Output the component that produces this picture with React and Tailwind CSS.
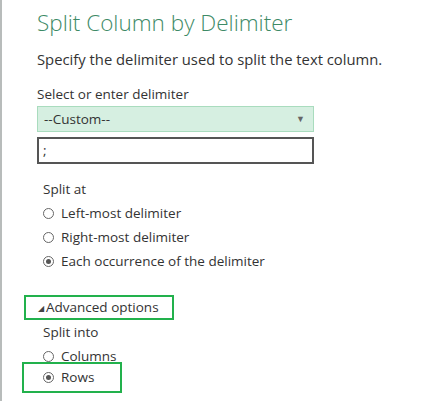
function Radio({ checked, label }) {
  return (
    <div className="flex items-center h-6 gap-[7px]">
      <span className="w-[11px] h-[11px] rounded-full border border-[#666] bg-white flex items-center justify-center">
        {checked && <span className="w-[5px] h-[5px] rounded-full bg-[#555]" />}
      </span>
      <span>{label}</span>
    </div>
  );
}

export default function App() {
  return (
    <div
      className="w-[434px] h-[401px] bg-white flex text-[#333] overflow-hidden"
      style={{ fontFamily: '"Segoe UI", "Open Sans", sans-serif' }}
    >
      <div className="w-[2px] bg-[#b8bcbb]" />
      <div className="flex-1 pl-[35px] pt-[7px]">
        <h1 className="text-[22.5px] font-light text-[#3d8a66] leading-8">Split Column by Delimiter</h1>
        <p className="text-[14.8px] mt-[10px] leading-5">Specify the delimiter used to split the text column.</p>
        <div className="text-[13.5px] mt-[15px] leading-5">Select or enter delimiter</div>
        <div className="mt-[2px] w-[277px] h-[26px] bg-[#d6efe1] border border-[#a9dcbe] flex items-center justify-between px-[6px] text-[13.5px]">
          <span>--Custom--</span>
          <span className="text-[#666] text-[9px] mr-[2px]">▼</span>
        </div>
        <div className="mt-[5px] w-[277px] h-[27px] border-2 border-[#555] flex items-center px-[4px] text-[13.5px]">;</div>
        <div className="pl-[6px] mt-[13px] text-[13.5px]">
          <div className="leading-6">Split at</div>
          <Radio label="Left-most delimiter" />
          <Radio label="Right-most delimiter" />
          <Radio checked label="Each occurrence of the delimiter" />
        </div>
        <div className="mt-[22px] -ml-[13px] w-[150px] h-[25px] border-2 border-[#22b14c] flex items-center pl-[12px] text-[13.5px]">
          <span className="text-[8px] text-[#444] mr-[2px]">◢</span>
          <span>Advanced options</span>
        </div>
        <div className="pl-[6px] text-[13.5px] mt-0">
          <div className="leading-6">Split into</div>
          <Radio label="Columns" />
          <div className="-mt-[6px] -ml-[21px] w-[100px] h-[31px] border-2 border-[#22b14c] flex items-center pl-[19px]">
            <Radio checked label="Rows" />
          </div>
        </div>
      </div>
    </div>
  );
}
